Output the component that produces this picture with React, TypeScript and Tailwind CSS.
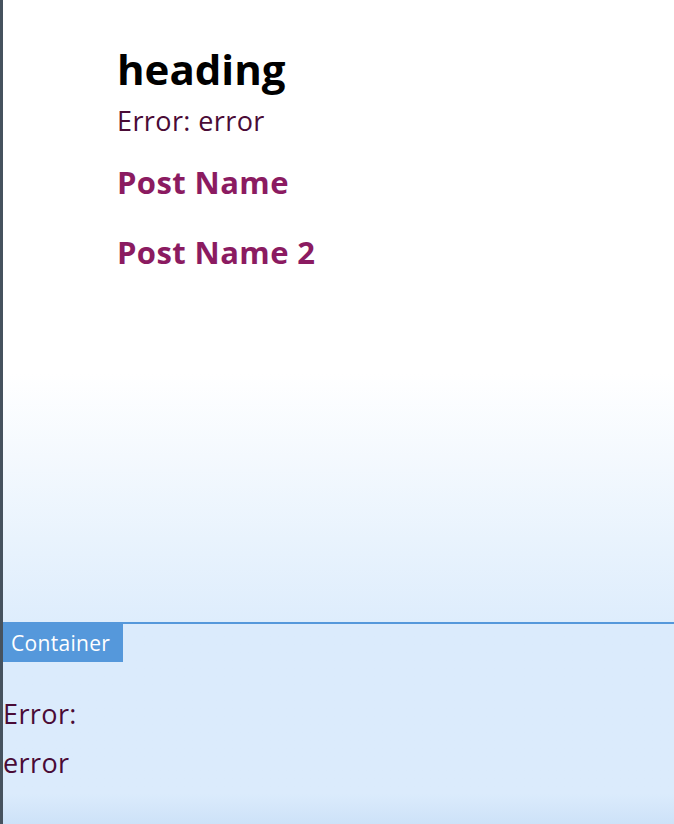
export default function App() {
  return (
    <div
      className="flex h-[824px] w-[674px] flex-col overflow-hidden border-l-[3px] border-[#46525e] bg-white"
      style={{ fontFamily: "'Open Sans', Lato, sans-serif" }}
    >
      <div className="flex h-[622px] flex-col bg-gradient-to-b from-white from-[60%] to-[#deedfc] pl-[114px] pt-[42px]">
        <h1 className="text-[42px] font-bold leading-[54px] text-black">heading</h1>
        <p className="mt-[8px] text-[27px] leading-[34px] tracking-[0.4px] text-[#4a0b36]">Error: error</p>
        <p className="mt-[25px] text-[31px] font-bold leading-[38px] tracking-[0.4px] text-[#8b1b61]">Post Name</p>
        <p className="mt-[32px] text-[31px] font-bold leading-[38px] tracking-[0.4px] text-[#8b1b61]">Post Name 2</p>
      </div>
      <div className="flex flex-1 flex-col border-t-2 border-[#5598db] bg-gradient-to-b from-[#dbebfc] from-[85%] to-[#cde2f8]">
        <span className="w-[120px] bg-[#5598db] pl-[8px] text-[21px] leading-[38px] tracking-[0.3px] text-white">Container</span>
        <p className="mt-[24px] text-[27px] leading-[56px] tracking-[0.4px] text-[#4a0b36]">Error:</p>
        <p className="mt-[5px] text-[27px] leading-[32px] tracking-[0.4px] text-[#4a0b36]">error</p>
      </div>
    </div>
  );
}
